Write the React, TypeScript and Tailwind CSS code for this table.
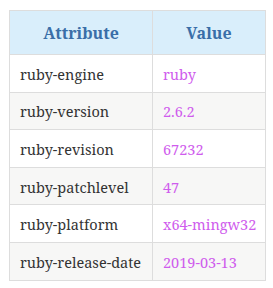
const rows: [string, string][] = [
  ['ruby-engine', 'ruby'],
  ['ruby-version', '2.6.2'],
  ['ruby-revision', '67232'],
  ['ruby-patchlevel', '47'],
  ['ruby-platform', 'x64-mingw32'],
  ['ruby-release-date', '2019-03-13'],
];

export default function App() {
  return (
    <div className="min-h-screen bg-white pt-[10px] pl-[9px] font-['Noto_Serif','DejaVu_Serif',serif]">
      <table className="w-[257px] table-fixed border-collapse text-[14.5px] leading-[20px]">
        <thead>
          <tr className="bg-[#d9eefb] text-[#3a6ea8]">
            <th className="h-[44px] w-[143px] border border-[#dddddd] pt-[1px] text-[16px] font-bold">Attribute</th>
            <th className="h-[44px] border border-[#dddddd] pt-[1px] text-[16px] font-bold">Value</th>
          </tr>
        </thead>
        <tbody>
          {rows.map(([k, v], i) => (
            <tr key={k} className={i % 2 === 1 ? 'bg-[#f7f7f6]' : 'bg-white'}>
              <td className="h-[37.6px] whitespace-nowrap border border-[#dddddd] px-[10px] pt-[1px] text-[#333333]">{k}</td>
              <td className="h-[37.6px] whitespace-nowrap border border-[#dddddd] px-[10px] pt-[1px] text-[#cf5ced]">{v}</td>
            </tr>
          ))}
        </tbody>
      </table>
    </div>
  );
}
